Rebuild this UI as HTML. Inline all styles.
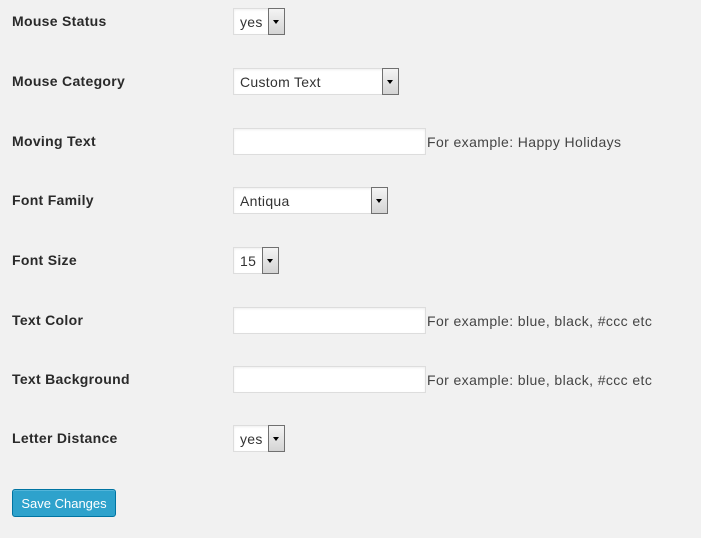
<!DOCTYPE html>
<html><head><meta charset="utf-8"><style>
body{margin:0;width:701px;height:538px;background:#f1f1f1;font-family:"Liberation Sans",sans-serif;position:relative;overflow:hidden}
.l{position:absolute;left:12px;font-size:14px;font-weight:bold;color:#2a2a2a;letter-spacing:0.3px}
.s,.i{position:absolute;left:233px;height:25px;background:#fff;border:1px solid #ddd;box-shadow:inset 0 1px 2px rgba(0,0,0,.07)}
.s span{position:absolute;left:6px;top:5px;font-size:14px;color:#333;letter-spacing:0.3px}
.s b{position:absolute;right:-1px;top:-1px;width:15px;height:25px;border:1px solid #707070;background:linear-gradient(#f4f4f4,#d4d4d4)}
.s b:after{content:"";position:absolute;left:4px;top:11px;border-left:3.5px solid transparent;border-right:3.5px solid transparent;border-top:4px solid #000}
.h{position:absolute;left:427px;font-size:14px;color:#444;letter-spacing:0.4px}
.btn{position:absolute;left:12px;top:489px;width:102px;height:26px;background:#2ea2cc;border:1px solid #0074a2;border-radius:3px;color:#fff;font-size:13px;text-align:center;line-height:27px;box-shadow:inset 0 1px 0 rgba(120,200,230,.5)}
</style></head><body>
<div class="l" style="top:13px">Mouse Status</div>
<div class="s" style="top:8px;width:50px"><span>yes</span><b></b></div>
<div class="l" style="top:73px">Mouse Category</div>
<div class="s" style="top:68px;width:164px"><span>Custom Text</span><b></b></div>
<div class="l" style="top:133px">Moving Text</div>
<div class="i" style="top:128px;width:191px"></div><div class="h" style="top:134px">For example: Happy Holidays</div>
<div class="l" style="top:192px">Font Family</div>
<div class="s" style="top:187px;width:153px"><span>Antiqua</span><b></b></div>
<div class="l" style="top:252px">Font Size</div>
<div class="s" style="top:247px;width:44px"><span>15</span><b></b></div>
<div class="l" style="top:312px">Text Color</div>
<div class="i" style="top:307px;width:191px"></div><div class="h" style="top:313px">For example: blue, black, #ccc etc</div>
<div class="l" style="top:371px">Text Background</div>
<div class="i" style="top:366px;width:191px"></div><div class="h" style="top:372px">For example: blue, black, #ccc etc</div>
<div class="l" style="top:430px">Letter Distance</div>
<div class="s" style="top:425px;width:50px"><span>yes</span><b></b></div>
<div class="btn">Save Changes</div>
</body></html>
